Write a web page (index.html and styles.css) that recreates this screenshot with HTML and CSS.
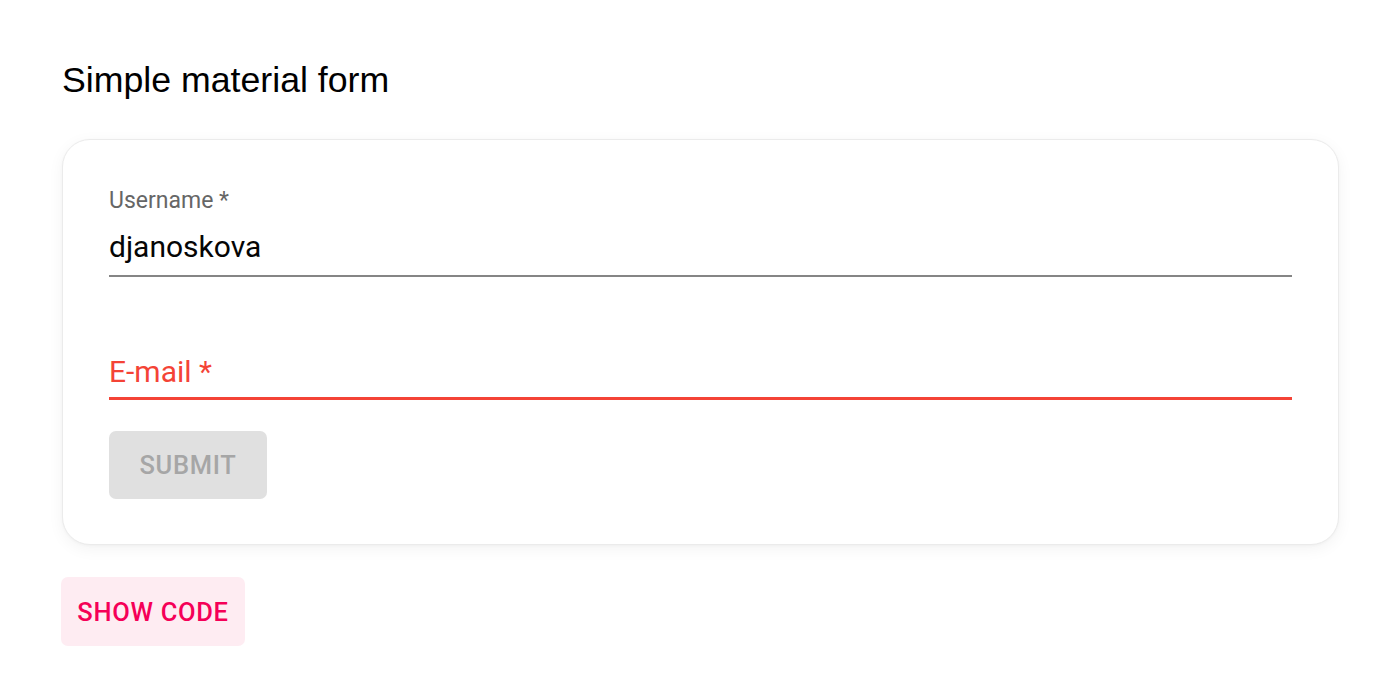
FILE: index.html
```html
<!DOCTYPE html>
<html lang="en">
<head>
<meta charset="utf-8">
<title>Simple material form</title>
<link rel="stylesheet" href="styles.css">
</head>
<body>
<main class="page">
  <h1 class="title">Simple material form</h1>
  <form class="card">
    <div class="field">
      <label class="field-label">Username *</label>
      <div class="field-input">djanoskova</div>
    </div>
    <div class="field field-error">
      <div class="field-input">E-mail *</div>
    </div>
    <button type="button" class="btn btn-disabled">Submit</button>
  </form>
  <button type="button" class="btn btn-code">Show code</button>
</main>
</body>
</html>
```

FILE: styles.css
```css
* { box-sizing: border-box; }

html, body {
  margin: 0;
  padding: 0;
  background: #ffffff;
}

.page {
  padding: 60px 61px 0 61px;
  display: flex;
  flex-direction: column;
  align-items: flex-start;
}

.title {
  margin: 0 0 0 1px;
  font-family: "Liberation Sans", Arial, sans-serif;
  font-weight: 400;
  font-size: 35.7px;
  line-height: 40px;
  color: #000;
}

.card {
  align-self: stretch;
  margin: 39px 0 0 1px;
  padding: 48px 46px 45px 46px;
  background: #fff;
  border: 1px solid #ebebeb;
  border-radius: 28px;
  box-shadow: 0 4px 16px rgba(0, 0, 0, 0.05), 0 1px 3px rgba(0, 0, 0, 0.03);
  display: flex;
  flex-direction: column;
  align-items: flex-start;
  font-family: Roboto, "Liberation Sans", sans-serif;
}

.field {
  align-self: stretch;
  display: flex;
  flex-direction: column;
}

.field-label {
  font-size: 23px;
  line-height: 26px;
  color: #666666;
}

.field-input {
  margin-top: 15px;
  font-size: 30px;
  line-height: 35px;
  color: #050505;
  padding-bottom: 11px;
  border-bottom: 2px solid #858585;
}

.field-error {
  margin-top: 34px;
  padding-top: 28px;
}

.field-error .field-input {
  color: #f44336;
  padding-bottom: 8px;
  border-bottom: 3px solid #f44336;
}

.btn {
  font-family: Roboto, "Liberation Sans", sans-serif;
  font-weight: 500;
  font-size: 25.5px;
  letter-spacing: 0.7px;
  text-transform: uppercase;
  border: none;
  border-radius: 7px;
  display: flex;
  align-items: center;
  justify-content: center;
  padding: 0;
}

.btn-disabled {
  margin-top: 31px;
  width: 158px;
  height: 68px;
  background: #e0e0e0;
  color: #a6a6a6;
}

.btn-code {
  margin-top: 32px;
  width: 184px;
  height: 69px;
  background: #feecf2;
  color: #f50057;
}
```
